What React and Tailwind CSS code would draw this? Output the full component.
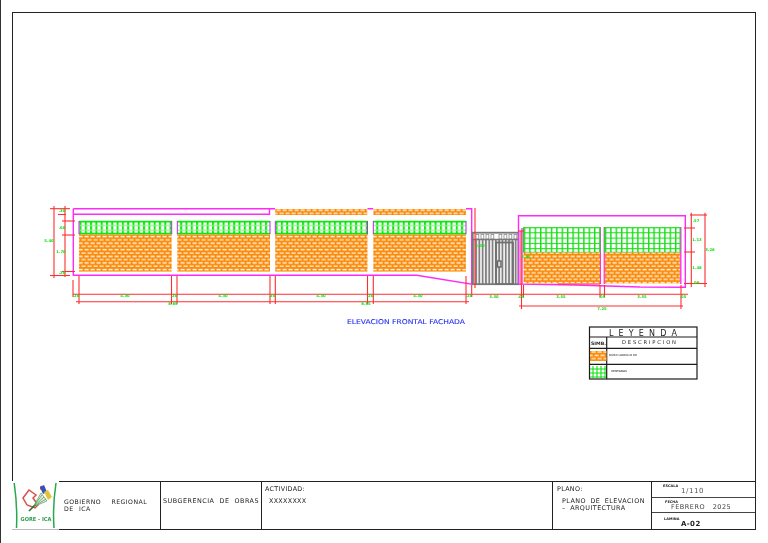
const RED = "#ff2c30";
const MAG = "#ff2bf5";
const GRN = "#0fe00f";

const redLines = [
  [54, 206, 54, 278], [65, 206, 65, 277], [50, 208.7, 70, 208.7], [58, 214.5, 66, 214.5],
  [62, 221, 75, 221], [62, 235, 75, 235], [62, 271.5, 75, 271.5], [50, 275.5, 70, 275.5],
  [73, 280, 73, 297], [79, 276, 79, 304], [171.5, 276, 171.5, 304], [177, 276, 177, 304],
  [270, 276, 270, 304], [275.3, 276, 275.3, 304], [367.5, 276, 367.5, 304], [373.3, 276, 373.3, 304],
  [466, 276, 466, 304], [471.7, 285, 471.7, 297], [73, 294.3, 688, 294.3], [76, 301.7, 469, 301.7],
  [475, 208, 475, 288],
  [521.5, 285, 521.5, 309], [523.5, 285, 523.5, 297], [600, 285, 600, 297], [604.5, 285, 604.5, 297],
  [681, 285, 681, 309], [519, 306, 683, 306], [521, 231, 521, 285], [518, 231, 524, 231],
  [691.3, 212.7, 691.3, 287], [705, 212.7, 705, 287], [690, 215, 707, 215], [684, 228, 695, 228],
  [684, 252, 695, 252], [684, 283.5, 707, 283.5], [558, 284, 600, 284],
];

const labels = [
  [49, 242, "5.40"], [62, 211.5, ".30"], [62, 228.5, ".60"], [61, 253, "1.70"], [62, 273.5, ".20"],
  [76, 297, ".20"], [125, 297, "4.30"], [174, 297, ".20"], [223, 297, "4.30"], [272, 297, ".20"],
  [321, 297, "4.30"], [370, 297, ".20"], [418, 297, "4.30"], [469, 297, ".20"], [173, 305, "8.85"],
  [366, 305, "8.85"], [480, 247, "2.30"], [494, 297.5, "3.30"], [521, 297.5, ".05"], [561, 297.5, "3.55"],
  [602, 297.5, ".05"], [642, 297.5, "3.55"], [683, 297.5, ".05"], [602, 309.5, "7.25"], [526, 258, "2.45"],
  [696, 222, ".57"], [697, 241, "1.13"], [697, 269, "1.48"], [696, 284, ".09"], [710, 251, "3.28"],
];

const facadePanels = [[79, 171.7], [177.3, 270], [275.3, 367.5], [373.3, 466]];
const fencePanels = [[523.5, 600], [604.8, 680]];

function Drawing() {
  return (
    <svg viewBox="13 13 742 468" className="block w-[742px] h-[468px]">
      <defs>
        <pattern id="brick" width="12" height="6.6" patternUnits="userSpaceOnUse" x="0" y="235">
          <rect width="12" height="6.6" fill="#fb8a08" />
          <rect x="0.5" y="0.8" width="4.2" height="1.5" fill="#fff1df" />
          <rect x="6.5" y="0.8" width="4.2" height="1.5" fill="#fff1df" />
          <rect x="3.5" y="4.1" width="4.2" height="1.5" fill="#ffe2bf" />
          <rect x="9.5" y="4.1" width="2.5" height="1.5" fill="#ffe2bf" />
          <rect x="0" y="4.1" width="1.7" height="1.5" fill="#ffe2bf" />
        </pattern>
        <pattern id="window" width="5.3" height="13.3" patternUnits="userSpaceOnUse" x="0" y="221">
          <rect width="5.3" height="13.3" fill="#fff" />
          <rect x="0" width="2" height="13.3" fill="#10e810" />
          <rect y="3.9" width="5.3" height="1.2" fill="#8df28d" />
          <rect y="8.6" width="5.3" height="1.2" fill="#8df28d" />
        </pattern>
        <pattern id="mesh" width="5.4" height="5.3" patternUnits="userSpaceOnUse" x="0" y="227">
          <rect width="5.4" height="5.3" fill="#fff" />
          <rect x="0" width="1.4" height="5.3" fill="#12e012" />
          <rect y="0" width="5.4" height="1" fill="#12e012" />
        </pattern>
        <pattern id="bars" width="3.3" height="10" patternUnits="userSpaceOnUse">
          <rect width="3.3" height="10" fill="#efefef" />
          <rect width="1.7" height="10" fill="#808080" />
        </pattern>
      </defs>

      <g fill="none" stroke={MAG} strokeWidth="1.4">
        <path d="M73.3 208.7H269.5V214.3H73.3" />
        <path d="M73.3 208.7V275.3H416.7L471.7 284.3V208.7H466" />
        <path d="M270 208.7H275M367.5 208.7H373.3" />
      </g>
      <rect x="275.3" y="209" width="92" height="6" fill="url(#brick)" />
      <rect x="373.3" y="209" width="92.7" height="6" fill="url(#brick)" />
      {facadePanels.map(([a, b]) => (
        <g key={a}>
          <rect x={a} y="221" width={b - a} height="13.3" fill="url(#window)" />
          <path d={`M${a} 221.7H${b}M${a} 233.6H${b}`} stroke="#0fe40f" strokeWidth="1.8" />
          <path d={`M${a} 221V234.3M${b} 221V234.3`} stroke="#b030e0" strokeWidth="1" />
          <rect x={a} y="234.6" width={b - a} height="37" fill="url(#brick)" />
        </g>
      ))}

      <rect x="473" y="240" width="45.5" height="44" fill="url(#bars)" />
      <rect x="472.7" y="232.7" width="45.8" height="51.5" fill="none" stroke="#777" strokeWidth="1.8" />
      {[476, 481, 486, 491, 499, 504, 509, 514].map((x) => (
        <rect key={x} x={x} y="234.5" width="2.8" height="4.5" fill="#fff" stroke="#8a8a8a" strokeWidth="0.8" />
      ))}
      <path d="M472.5 239.5H518.5" stroke="#777" strokeWidth="1.4" />
      <rect x="496" y="242.5" width="17" height="41.5" fill="url(#bars)" stroke="#6f6f6f" strokeWidth="1.8" />
      <rect x="497.5" y="261" width="3.5" height="6" fill="#ddd" stroke="#666" strokeWidth="1.4" />

      <g fill="none" stroke={MAG} strokeWidth="1.4">
        <path d="M518.5 284V215.7H685.3V287.3L640 287L575 285L518.5 284" />
        <path d="M600.3 227V284M604.3 227V284M680.8 227V284M522 228V284" />
      </g>
      {fencePanels.map(([a, b]) => (
        <g key={a}>
          <rect x={a} y="227.7" width={b - a} height="24.6" fill="url(#mesh)" stroke="#12e012" strokeWidth="1" />
          <rect x={a} y="252.4" width={b - a} height="31" fill="url(#brick)" />
        </g>
      ))}

      <g stroke={RED} strokeWidth="1.1">
        {redLines.map(([x1, y1, x2, y2], i) => (
          <line key={i} x1={x1} y1={y1} x2={x2} y2={y2} />
        ))}
      </g>
      <g fill={GRN} fontFamily="'DejaVu Sans', sans-serif" fontSize="3.8" fontWeight="700" textAnchor="middle">
        {labels.map(([x, y, t], i) => (
          <text key={i} x={x} y={y}>{t}</text>
        ))}
      </g>

      <text x="347" y="323.5" fill="#2530f5" stroke="#2530f5" strokeWidth="0.1" fontFamily="'DejaVu Sans', sans-serif" fontSize="6.6" textLength="118" lengthAdjust="spacingAndGlyphs">ELEVACION FRONTAL FACHADA</text>

      <g fill="none" stroke="#1c1c1c" strokeWidth="1.2">
        <rect x="589.5" y="327" width="107.5" height="52" />
        <path d="M589.5 337H697M589.5 348.3H697M589.5 364.3H697M606.7 337V379" />
      </g>
      <rect x="590" y="351" width="16.5" height="10" fill="url(#brick)" />
      <g stroke="#10e010" strokeWidth="1.1">
        <path d="M590 369H606M590 373H606M590 377H606M593 366V378M597 366V378M601 366V378M605 366V378" />
      </g>
      <g fontFamily="'DejaVu Sans', sans-serif" fill="#222">
        <text x="609" y="335.8" fontSize="8" textLength="68" lengthAdjust="spacing">L E Y E N D A</text>
        <text x="591" y="345" fontSize="4.6" fontWeight="700" textLength="15" lengthAdjust="spacingAndGlyphs">SIMB.</text>
        <text x="622" y="343.5" fontSize="5.2" textLength="54" lengthAdjust="spacing">DESCRIPCION</text>
        <text x="609" y="355.5" fontSize="2.6" fontWeight="700" fill="#666" textLength="28" lengthAdjust="spacingAndGlyphs">MURO LADRILLO KK</text>
        <text x="611" y="371.5" fontSize="2.6" fontWeight="700" fill="#666" textLength="16" lengthAdjust="spacingAndGlyphs">VENTANAS</text>
      </g>
    </svg>
  );
}

function Logo() {
  return (
    <svg viewBox="0 0 46 49" className="block w-[46px] h-[49px]">
      <g fill="none" stroke="#27a84a" strokeWidth="1.5">
        <path d="M1.2 2Q4.5 25 3.5 47" />
        <path d="M43 2Q39.5 25 41 47" />
      </g>
      <path d="M10 17L16 9L23 14L20 17L25 24L22 27L14 24Z" fill="#fff" stroke="#d8504a" strokeWidth="1.5" />
      <path d="M20 26L28 12L34 20Z" fill="#e8efe2" stroke="#5d9a5d" strokeWidth="0.7" />
      <path d="M20 26L29 14M20 26L31 16M20 26L33 18" stroke="#2f8a3f" strokeWidth="0.7" />
      <path d="M16 30L21 25" stroke="#2f6f35" strokeWidth="1.6" />
      <circle cx="29" cy="7" r="2.2" fill="#d8484a" />
      <path d="M27 6L31 4L34 11L30 13Z" fill="#3550b8" />
      <path d="M31 11L35 9L39 16L35 19Z" fill="#e3c23c" />
      <text x="23" y="40" textAnchor="middle" fontFamily="'DejaVu Sans', sans-serif" fontWeight="700" fontSize="5.4" textLength="31" lengthAdjust="spacingAndGlyphs" fill="#2f9e4f">GORE - ICA</text>
    </svg>
  );
}

const cell = "border-l border-[#222] text-[#222]";

export default function App() {
  return (
    <div className="w-[768px] h-[543px] bg-white pt-3 pl-3 pr-3 border-l border-[#333] blur-[0.35px] font-['DejaVu_Sans',sans-serif]">
      <div className="w-[744px] -ml-px border-t border-x border-[#222]">
        <Drawing />
      </div>

      <div className="flex w-[744px] h-[49px] -ml-px">
        <div className="w-[47px] shrink-0 border-b border-[#bbb] pl-px">
          <Logo />
        </div>
        <div className="flex flex-1 border-t border-b border-r border-[#222]">
          <div className="w-[101px] pl-[5px] pt-[16px] text-[6.2px] leading-[7px] tracking-[0.45px] text-[#222]">
            <div className="[word-spacing:8px]">GOBIERNO REGIONAL</div>
            <div className="[word-spacing:3px]">DE ICA</div>
          </div>
          <div className={`${cell} w-[101px] pl-[2px] pt-[16px] text-[6.4px] leading-[7px] tracking-[0.5px] [word-spacing:2.5px]`}>
            SUBGERENCIA DE OBRAS
          </div>
          <div className={`${cell} w-[291px] pl-[3px] pt-[4px] text-[6.4px] leading-[7px] tracking-[0.3px]`}>
            <div>ACTIVIDAD:</div>
            <div className="pl-[4px] pt-[5px] tracking-[0.3px]">XXXXXXXX</div>
          </div>
          <div className={`${cell} w-[99px] pl-[4px] pt-[4px] text-[6.4px] leading-[7px]`}>
            <div className="tracking-[0.3px]">PLANO:</div>
            <div className="pl-[5px] pt-[5px] tracking-[0.45px] [word-spacing:2px]">
              <div>PLANO DE ELEVACION</div>
              <div>– ARQUITECTURA</div>
            </div>
          </div>
          <div className={`${cell} flex-1 flex flex-col`}>
            <div className="h-[16px] border-b-[1.5px] border-[#444] pl-[11px] pt-[2px] text-[3.5px] leading-[4px] font-bold text-[#222]">
              <div>ESCALA</div>
              <div className="pl-[18px] text-[7px] leading-[7px] font-normal tracking-[0.6px] text-[#555]">1/110</div>
            </div>
            <div className="h-[15px] border-b-[1.5px] border-[#444] pl-[13px] pt-[2px] text-[3.5px] leading-[4px] font-bold text-[#222]">
              <div>FECHA</div>
              <div className="pl-[6px] text-[6.5px] leading-[7px] font-normal tracking-[0.5px] [word-spacing:5px] text-[#444]">FEBRERO 2025</div>
            </div>
            <div className="flex-1 pl-[12px] pt-[4px] text-[3.5px] leading-[4px] font-bold text-[#222]">
              <div>LAMINA</div>
              <div className="pl-[17px] text-[7px] leading-[7px] tracking-[0.4px]">A-02</div>
            </div>
          </div>
        </div>
      </div>
    </div>
  );
}
